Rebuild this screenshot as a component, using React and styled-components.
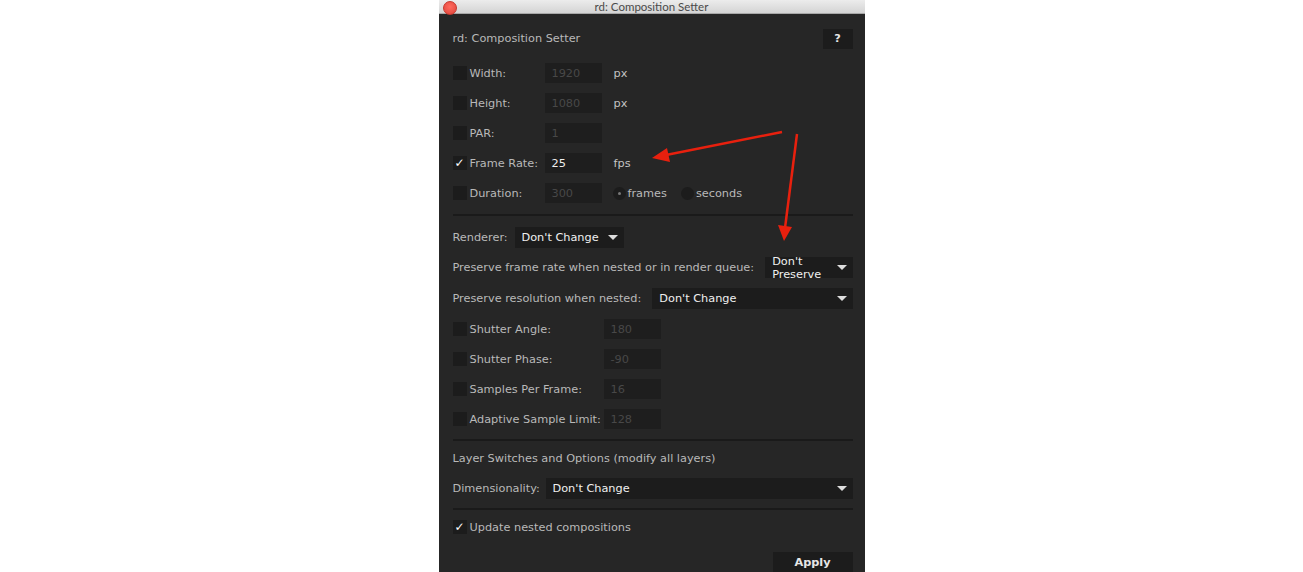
import React from "react";
import styled, { createGlobalStyle } from "styled-components";

const G = createGlobalStyle`
  html,body{margin:0;padding:0;background:#fff;}
  body{font-family:"DejaVu Sans","Liberation Sans",sans-serif;}
`;
const Win = styled.div`
  position:relative;width:426px;height:572px;margin:0 auto;background:#262626;
  display:flex;flex-direction:column;
`;
const TitleBar = styled.div`
  height:15px;background:linear-gradient(#ececec,#d4d4d4);border-bottom:1px solid #a8a8a8;
  display:flex;align-items:center;justify-content:center;position:relative;
  font-size:11.5px;color:#4a4a4a;font-family:"Lato","DejaVu Sans",sans-serif;
`;
const Close = styled.span`
  position:absolute;left:4px;top:1px;width:12px;height:12px;border-radius:50%;
  background:radial-gradient(circle at 50% 40%,#ff6b5f,#e0443a);border:0.5px solid #c7372d;
`;
const Body = styled.div`
  padding:14px 12px 0 14px;display:flex;flex-direction:column;
  font-size:11.3px;color:#b9b9b9;
`;
const Header = styled.div`display:flex;justify-content:space-between;align-items:center;height:21px;margin-bottom:9px;`;
const Btn = styled.div`
  background:#1c1c1c;color:#e6e6e6;font-weight:bold;display:flex;align-items:center;justify-content:center;
  width:${p=>p.w}px;height:20px;
`;
const Row = styled.div`display:flex;align-items:center;height:30px;`;
const Check = styled.div`
  width:14px;height:14px;background:#1c1c1c;margin-right:3px;color:#fff;font-size:12px;
  display:flex;align-items:center;justify-content:center;line-height:1;
`;
const Label = styled.span`width:${p=>p.w?p.w+"px":"auto"};`;
const Input = styled.div`
  width:57px;height:20px;background:#1e1e1e;box-sizing:border-box;padding-left:7px;
  display:flex;align-items:center;color:${p=>p.on?"#f0f0f0":"#484848"};
`;
const Unit = styled.span`margin-left:12px;color:${p=>p.dim?"#777":"#c4c4c4"};`;
const Radio = styled.span`
  width:13px;height:13px;border-radius:50%;background:#1c1c1c;margin-left:${p=>p.ml}px;margin-right:2px;
  display:flex;align-items:center;justify-content:center;
  &::after{content:"";width:3px;height:3px;border-radius:50%;background:${p=>p.on?"#777":"transparent"};}
`;
const Sep = styled.div`height:2px;background:#1a1a1a;margin:${p=>p.m};`;
const Drop = styled.div`
  height:21px;background:#1c1c1c;color:#f0f0f0;display:flex;align-items:center;justify-content:space-between;
  padding:0 6px 0 7px;box-sizing:border-box;margin-left:${p=>p.ml||0}px;
  ${p=>p.grow?"flex:1;":`width:${p.w}px;`}
  &::after{content:"";border-left:5px solid transparent;border-right:5px solid transparent;border-top:5px solid #ddd;}
`;
const Footer = styled.div`display:flex;justify-content:flex-end;margin-top:10px;`;
const Arrows = styled.svg`position:absolute;left:0;top:0;pointer-events:none;`;

const CRow = ({label,lw,val,on,unit,children}) => (
  <Row>
    <Check>{on?"✓":""}</Check>
    <Label w={lw}>{label}</Label>
    <Input on={on}>{val}</Input>
    {unit && <Unit>{unit}</Unit>}
    {children}
  </Row>
);

export default function App(){
  return (<>
    <G/>
    <Win>
      <TitleBar><Close/>rd: Composition Setter</TitleBar>
      <Body>
        <Header><span>rd: Composition Setter</span><Btn w={30}>?</Btn></Header>
        <CRow label="Width:" lw={75} val="1920" unit="px"/>
        <CRow label="Height:" lw={75} val="1080" unit="px"/>
        <CRow label="PAR:" lw={75} val="1"/>
        <CRow label="Frame Rate:" lw={75} val="25" on unit="fps"/>
        <CRow label="Duration:" lw={75} val="300">
          <Radio ml={11} on/><span>frames</span>
          <Radio ml={14}/><span>seconds</span>
        </CRow>
        <Sep m="6px 0 0"/>
        <Row style={{marginTop:6}}><Label w={62}>Renderer:</Label><Drop w={109}>Don't Change</Drop></Row>
        <Row style={{height:31}}><Label>Preserve frame rate when nested or in render queue:</Label><Drop grow ml={11}>Don't Preserve</Drop></Row>
        <Row style={{height:31}}><Label>Preserve resolution when nested:</Label><Drop grow ml={11}>Don't Change</Drop></Row>
        <CRow label="Shutter Angle:" lw={134} val="180"/>
        <CRow label="Shutter Phase:" lw={134} val="-90"/>
        <CRow label="Samples Per Frame:" lw={134} val="16"/>
        <CRow label="Adaptive Sample Limit:" lw={134} val="128"/>
        <Sep m="5px 0 0"/>
        <Row style={{marginTop:2}}>Layer Switches and Options (modify all layers)</Row>
        <Row><Label w={93}>Dimensionality:</Label><Drop grow>Don't Change</Drop></Row>
        <Sep m="5px 0 0"/>
        <Row style={{marginTop:2}}><Check>✓</Check><span>Update nested compositions</span></Row>
        <Footer><Btn w={80}>Apply</Btn></Footer>
      </Body>
      <Arrows width="426" height="572">
        <g stroke="#e8200e" strokeWidth="2.5" fill="#e8200e">
          <line x1="343" y1="132" x2="222" y2="156"/>
          <polygon points="213,158 228,148 231,162" stroke="none"/>
          <line x1="358" y1="134" x2="346" y2="228"/>
          <polygon points="345,241 339,225 353,227" stroke="none"/>
        </g>
      </Arrows>
    </Win>
  </>);
}
